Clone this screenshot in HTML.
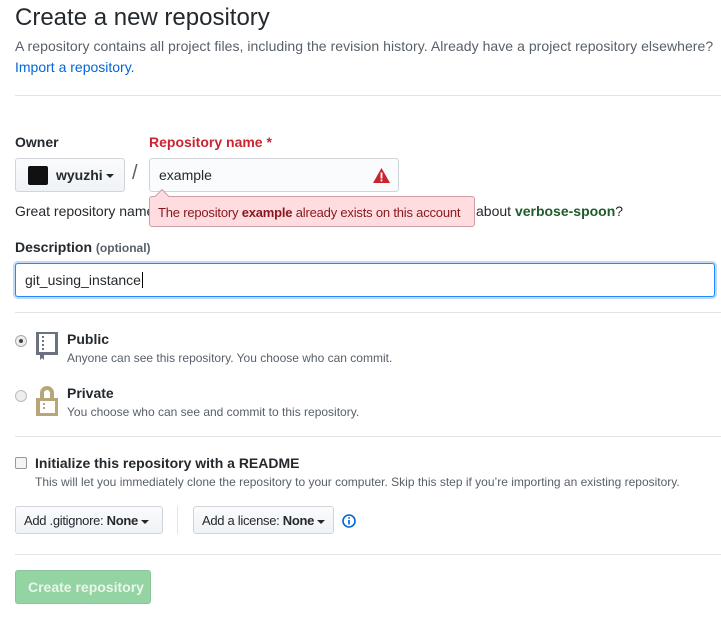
<!DOCTYPE html>
<html><head><meta charset="utf-8"><style>
*{box-sizing:border-box;margin:0;padding:0}
body{width:721px;height:636px;background:#fff;font-family:"Liberation Sans",sans-serif;color:#24292e;position:relative;overflow:hidden;font-size:14px}
.a{position:absolute;white-space:nowrap}
.hr{position:absolute;left:15px;right:0;height:1px;background:#e1e4e8}
.btn{position:absolute;border:1px solid #d1d5da;border-radius:3px;background:linear-gradient(#fafbfc,#eff3f6);font-size:13px;color:#24292e;white-space:nowrap}
.caret{display:inline-block;width:0;height:0;border-left:4px solid transparent;border-right:4px solid transparent;border-top:4px solid #24292e;vertical-align:middle;margin-left:3px}
b{font-weight:bold}
</style></head><body>
<div class="a" style="left:15px;top:4px;font-size:24px;color:#24292e">Create a new repository</div>
<div class="a" style="left:15px;top:38px;font-size:14px;color:#586069;letter-spacing:0.05px">A repository contains all project files, including the revision history. Already have a project repository elsewhere?</div>
<div class="a" style="left:15px;top:59px;font-size:14px;color:#0366d6">Import a repository.</div>
<div class="hr" style="top:95px"></div>

<div class="a" style="left:15px;top:134px;font-weight:bold;font-size:14px">Owner</div>
<div class="a" style="left:149px;top:134px;font-weight:bold;font-size:14px;color:#cb2431">Repository name *</div>
<div class="btn" style="left:15px;top:158px;width:110px;height:34px;font-size:14px">
 <div class="a" style="left:12px;top:7px;width:20px;height:19px;background:#111;border-radius:2px"></div>
 <div class="a" style="left:40px;top:8px;font-weight:bold">wyuzhi<span class="caret"></span></div>
</div>
<div class="a" style="left:132px;top:162px;font-size:20px;color:#586069">/</div>
<div class="a" style="left:149px;top:158px;width:250px;height:34px;border:1px solid #d1d5da;border-radius:3px;background:#fafbfc">
 <div class="a" style="left:9px;top:8px;font-size:14px">example</div>
 <svg class="a" style="left:223px;top:9px" width="17" height="15" viewBox="0 0 17 15"><path d="M8.5 0L17 15H0z" fill="#cb2431"/><rect x="7.6" y="4.5" width="1.8" height="6" fill="#fff"/><rect x="7.6" y="11.5" width="1.8" height="1.8" fill="#fff"/></svg>
</div>
<div class="a" style="left:15px;top:203px;font-size:14px">Great repository name</div>
<div class="a" style="left:476px;top:203px;font-size:14px">about <b style="color:#1f5b2b">verbose-spoon</b>?</div>
<div class="a" style="left:149px;top:196px;width:326px;height:31px;background:#ffdce0;border:1px solid #cea0a5;border-radius:3px;font-size:13px;color:#86181d;padding:8px 8px;letter-spacing:-0.2px">The repository <b>example</b> already exists on this account</div>
<div class="a" style="left:157px;top:191px;width:10px;height:10px;background:#ffdce0;border-left:1px solid #cea0a5;border-top:1px solid #cea0a5;transform:rotate(45deg)"></div>

<div class="a" style="left:15px;top:239px;font-weight:bold;font-size:14px">Description <span style="font-size:12px;color:#586069;font-weight:bold">(optional)</span></div>
<div class="a" style="left:15px;top:263px;width:700px;height:34px;border:1px solid #2188ff;border-radius:3px;box-shadow:0 0 0 2px rgba(3,102,214,.25);background:#fff">
 <div class="a" style="left:9px;top:8px;font-size:14px">git_using_instance<span style="border-left:1px solid #000;margin-left:1px"></span></div>
</div>
<div class="hr" style="top:312px"></div>

<div class="a" style="left:15px;top:335px;width:12px;height:12px;border-radius:50%;border:1px solid #aaa;background:#eee"><div class="a" style="left:3px;top:3px;width:4px;height:4px;border-radius:50%;background:#444"></div></div>
<svg class="a" style="left:35px;top:331px" width="24" height="30" viewBox="0 0 24 30"><path d="M1 1h22v23H9v5l-2-2-2 2v-5H1z" fill="#6a737d"/><rect x="4" y="3" width="16" height="18" fill="#fff"/><g fill="#6a737d"><rect x="7" y="5" width="2" height="2"/><rect x="7" y="9" width="2" height="2"/><rect x="7" y="13" width="2" height="2"/><rect x="7" y="17" width="2" height="2"/></g></svg>
<div class="a" style="left:67px;top:331px;font-weight:bold;font-size:14px">Public</div>
<div class="a" style="left:67px;top:351px;font-size:12px;color:#586069">Anyone can see this repository. You choose who can commit.</div>

<div class="a" style="left:15px;top:390px;width:12px;height:12px;border-radius:50%;border:1px solid #bbb;background:#eee"></div>
<svg class="a" style="left:35px;top:385px" width="24" height="32" viewBox="0 0 24 32"><path d="M5 13V8a7 7 0 0114 0v5h-4V8a3 3 0 00-6 0v5z" fill="#b8a67a"/><rect x="1" y="13" width="22" height="18" fill="#b8a67a"/><rect x="5" y="16" width="15" height="12" fill="#fff"/><g fill="#b8a67a"><rect x="8" y="18" width="2" height="2"/><rect x="8" y="22" width="2" height="2"/></g></svg>
<div class="a" style="left:67px;top:385px;font-weight:bold;font-size:14px">Private</div>
<div class="a" style="left:67px;top:405px;font-size:12px;color:#586069">You choose who can see and commit to this repository.</div>
<div class="hr" style="top:436px"></div>

<div class="a" style="left:15px;top:457px;width:12px;height:12px;border:1px solid #999;border-radius:2px;background:#f4f4f4"></div>
<div class="a" style="left:35px;top:455px;font-weight:bold;font-size:14px">Initialize this repository with a README</div>
<div class="a" style="left:35px;top:475px;font-size:12px;color:#586069">This will let you immediately clone the repository to your computer. Skip this step if you’re importing an existing repository.</div>

<div class="btn" style="left:15px;top:506px;width:148px;height:28px;padding:6px 8px;letter-spacing:-0.3px">Add .gitignore: <b>None</b><span class="caret"></span></div>
<div class="a" style="left:177px;top:506px;width:1px;height:28px;background:#e1e4e8"></div>
<div class="btn" style="left:193px;top:506px;width:141px;height:28px;padding:6px 8px;letter-spacing:-0.3px">Add a license: <b>None</b><span class="caret"></span></div>
<svg class="a" style="left:342px;top:514px" width="14" height="14" viewBox="0 0 14 14"><circle cx="7" cy="7" r="6" fill="none" stroke="#0366d6" stroke-width="1.6"/><rect x="6.2" y="6" width="1.6" height="4.5" fill="#0366d6"/><rect x="6.2" y="3.2" width="1.6" height="1.6" fill="#0366d6"/></svg>
<div class="hr" style="top:554px"></div>

<div class="a" style="left:15px;top:570px;width:136px;height:34px;background:#94d3a2;border:1px solid #8cc59a;border-radius:3px;color:#e9f6ec;font-weight:bold;font-size:14px;padding:8px 12px">Create repository</div>
</body></html>
